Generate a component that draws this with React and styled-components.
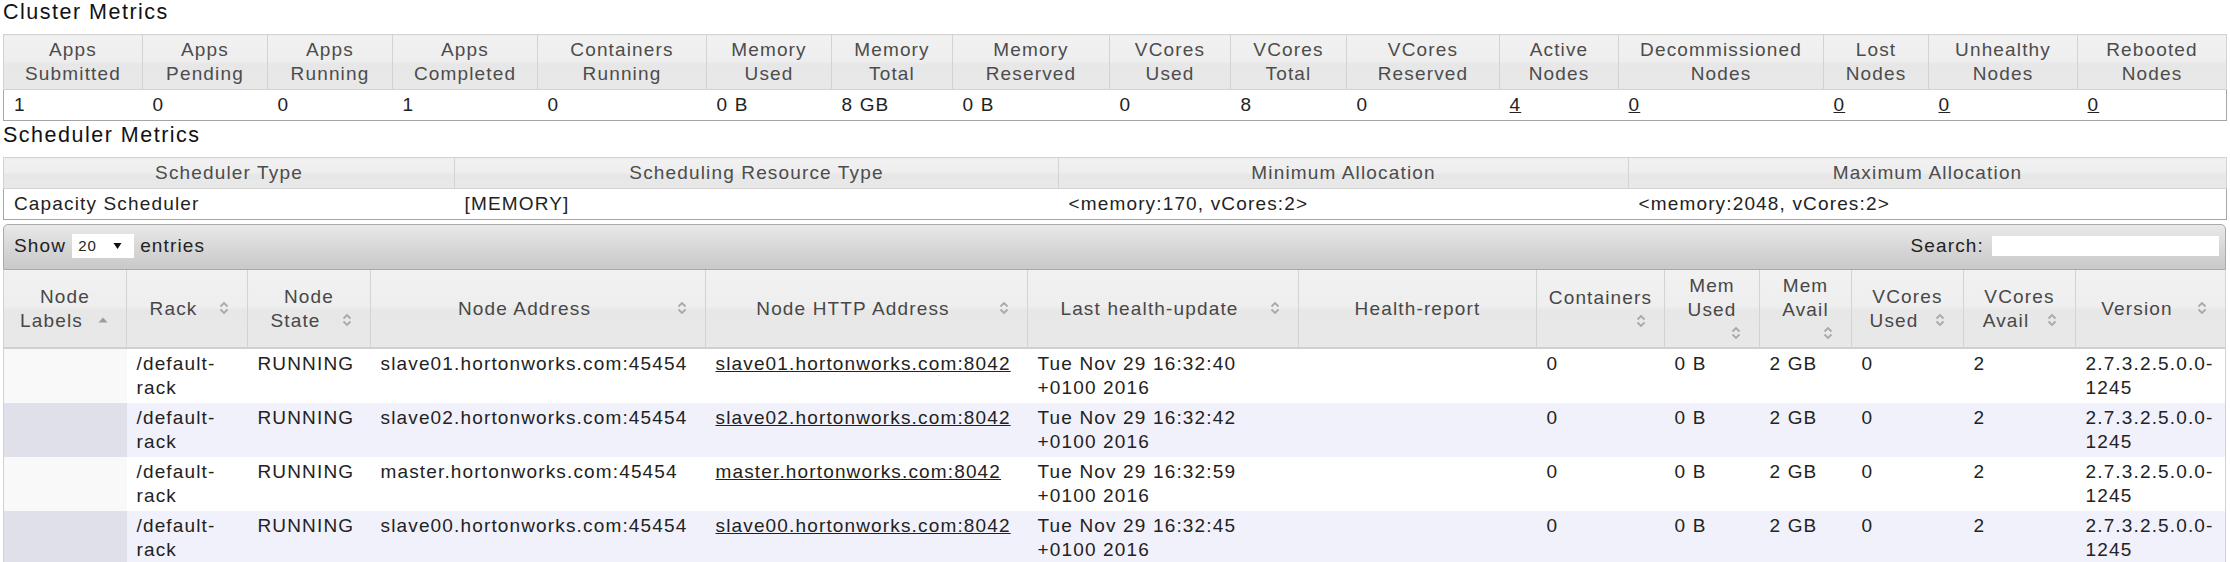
import React from 'react';
import styled, { createGlobalStyle } from 'styled-components';

const GlobalStyle = createGlobalStyle`
  body {
    margin: 0;
    background: #fff;
    color: #222;
    font-family: "Liberation Sans", Arial, sans-serif;
    font-size: 19px;
    letter-spacing: 1.15px;
  }
`;

const Page = styled.div`
  padding: 0 4px 0 3px;
`;

const Heading = styled.h3`
  margin: 0 0 10px;
  font-size: 21.5px;
  letter-spacing: 1.5px;
  line-height: 24px;
  font-weight: normal;
  color: #111;
`;

const headerGlass = `
  background: linear-gradient(
    to bottom,
    #f1f1f1 0%,
    #eeeeee 48%,
    #e7e7e7 52%,
    #e8e8e8 100%
  );
`;

const InfoTable = styled.table`
  width: 100%;
  table-layout: fixed;
  border-collapse: collapse;
  margin-bottom: 2px;
`;

const InfoHead = styled.th`
  ${headerGlass}
  border: 1px solid #d3d3d3;
  padding: 3px 10px;
  line-height: 24px;
  font-weight: normal;
  color: #4c4c4c;
  text-align: center;
`;

const InfoCell = styled.td`
  padding: 3px 10px;
  line-height: 24px;
  text-align: left;
  border-bottom: 1px solid #a6a6a6;
  &:first-child {
    border-left: 1px solid #a6a6a6;
  }
  &:last-child {
    border-right: 1px solid #a6a6a6;
  }
`;

const Link = styled.a`
  color: #222;
  text-decoration: underline;
`;

const Toolbar = styled.div`
  display: flex;
  justify-content: space-between;
  align-items: center;
  margin-top: 4px;
  padding: 9px 6px 11px 10px;
  border: 1px solid #aaa;
  border-radius: 5px 5px 0 0;
  background: linear-gradient(to bottom, #e9e9e9 0%, #d6d6d6 55%, #c9c9c9 100%);
  line-height: 24px;
  color: #222;
`;

const LengthControl = styled.div`
  display: flex;
  align-items: center;
  gap: 6px;
`;

const SelectBox = styled.div`
  display: flex;
  align-items: center;
  justify-content: space-between;
  width: 62px;
  height: 24px;
  box-sizing: border-box;
  padding: 0 12px 0 6px;
  background: #fff;
  font-size: 15px;
  letter-spacing: 1px;
`;

const FilterControl = styled.div`
  display: flex;
  align-items: center;
  gap: 8px;
`;

const SearchInput = styled.div`
  width: 227px;
  height: 20px;
  background: #fff;
`;

const NodesTable = styled.table`
  width: 100%;
  table-layout: fixed;
  border-collapse: collapse;
  border-left: 1px solid #d3d3d3;
  border-right: 1px solid #d3d3d3;
`;

const NodesHead = styled.th`
  ${headerGlass}
  border-right: 1px solid #d3d3d3;
  border-left: 1px solid #d3d3d3;
  border-bottom: 2px solid #d0d0d0;
  padding: 4px 10px 3px;
  line-height: 24px;
  font-weight: normal;
  color: #474747;
  text-align: center;
  vertical-align: middle;
`;

const SortIcon = styled.span`
  float: right;
  width: 27px;
  height: 22px;
  display: flex;
  align-items: center;
  justify-content: center;
`;

const NodeRow = styled.tr`
  background: ${(p) => (p.$alt ? '#f1f1fb' : '#ffffff')};
  &:last-child td {
    border-bottom: 2px solid #ababab;
  }
`;

const NodeCell = styled.td`
  padding: 3px 10px;
  line-height: 24px;
  vertical-align: top;
  text-align: left;
  color: #222;
  background: ${(p) => (p.$sorted ? (p.$alt ? '#e0e0ea' : '#f9f9f9') : 'transparent')};
`;

const BothArrows = () => (
  <svg width="12" height="16" viewBox="0 0 12 16">
    <path
      d="M2.5 6.5 L6 3 L9.5 6.5 M2.5 9.5 L6 13 L9.5 9.5"
      fill="none"
      stroke="#a9a9a9"
      strokeWidth="1.8"
    />
  </svg>
);

const UpArrow = () => (
  <svg width="12" height="16" viewBox="0 0 12 16">
    <path d="M1.5 10.5 L6 5.5 L10.5 10.5 Z" fill="#9c9c9c" />
  </svg>
);

const DownCaret = () => (
  <svg width="9" height="8" viewBox="0 0 9 8">
    <path d="M0.5 1 L8.5 1 L4.5 7 Z" fill="#111" />
  </svg>
);

const clusterCols = [
  { w: 139, h: ['Apps', 'Submitted'], v: '1' },
  { w: 125, h: ['Apps', 'Pending'], v: '0' },
  { w: 125, h: ['Apps', 'Running'], v: '0' },
  { w: 145, h: ['Apps', 'Completed'], v: '1' },
  { w: 169, h: ['Containers', 'Running'], v: '0' },
  { w: 125, h: ['Memory', 'Used'], v: '0 B' },
  { w: 121, h: ['Memory', 'Total'], v: '8 GB' },
  { w: 157, h: ['Memory', 'Reserved'], v: '0 B' },
  { w: 121, h: ['VCores', 'Used'], v: '0' },
  { w: 116, h: ['VCores', 'Total'], v: '8' },
  { w: 153, h: ['VCores', 'Reserved'], v: '0' },
  { w: 119, h: ['Active', 'Nodes'], v: '4', link: true },
  { w: 205, h: ['Decommissioned', 'Nodes'], v: '0', link: true },
  { w: 105, h: ['Lost', 'Nodes'], v: '0', link: true },
  { w: 149, h: ['Unhealthy', 'Nodes'], v: '0', link: true },
  { w: 149, h: ['Rebooted', 'Nodes'], v: '0', link: true },
];

const schedCols = [
  { w: 451, h: 'Scheduler Type', v: 'Capacity Scheduler' },
  { w: 604, h: 'Scheduling Resource Type', v: '[MEMORY]' },
  { w: 570, h: 'Minimum Allocation', v: '<memory:170, vCores:2>' },
  { w: 598, h: 'Maximum Allocation', v: '<memory:2048, vCores:2>' },
];

const nodeCols = [
  { w: 123, label: 'Node Labels', sort: 'asc' },
  { w: 121, label: 'Rack', sort: 'both' },
  { w: 123, label: 'Node State', sort: 'both' },
  { w: 335, label: 'Node Address', sort: 'both' },
  { w: 322, label: 'Node HTTP Address', sort: 'both' },
  { w: 271, label: 'Last health-update', sort: 'both' },
  { w: 238, label: 'Health-report', sort: null },
  { w: 128, label: 'Containers', sort: 'both' },
  { w: 95, label: 'Mem Used', sort: 'both' },
  { w: 92, label: 'Mem Avail', sort: 'both' },
  { w: 112, label: 'VCores Used', sort: 'both' },
  { w: 112, label: 'VCores Avail', sort: 'both' },
  { w: 150, label: 'Version', sort: 'both' },
];

const nodes = [
  { host: 'slave01', time: '16:32:40' },
  { host: 'slave02', time: '16:32:42' },
  { host: 'master', time: '16:32:59' },
  { host: 'slave00', time: '16:32:45' },
];

const App = () => {
  return (
    <Page>
      <GlobalStyle />

      <Heading>Cluster Metrics</Heading>
      <InfoTable>
        <colgroup>
          {clusterCols.map((c, i) => (
            <col key={i} style={{ width: c.w }} />
          ))}
        </colgroup>
        <thead>
          <tr>
            {clusterCols.map((c, i) => (
              <InfoHead key={i}>
                {c.h[0]}
                <br />
                {c.h[1]}
              </InfoHead>
            ))}
          </tr>
        </thead>
        <tbody>
          <tr>
            {clusterCols.map((c, i) => (
              <InfoCell key={i}>{c.link ? <Link href="#">{c.v}</Link> : c.v}</InfoCell>
            ))}
          </tr>
        </tbody>
      </InfoTable>

      <Heading>Scheduler Metrics</Heading>
      <InfoTable>
        <colgroup>
          {schedCols.map((c, i) => (
            <col key={i} style={{ width: c.w }} />
          ))}
        </colgroup>
        <thead>
          <tr>
            {schedCols.map((c, i) => (
              <InfoHead key={i}>{c.h}</InfoHead>
            ))}
          </tr>
        </thead>
        <tbody>
          <tr>
            {schedCols.map((c, i) => (
              <InfoCell key={i}>{c.v}</InfoCell>
            ))}
          </tr>
        </tbody>
      </InfoTable>

      <Toolbar>
        <LengthControl>
          <span>Show</span>
          <SelectBox>
            <span>20</span>
            <DownCaret />
          </SelectBox>
          <span>entries</span>
        </LengthControl>
        <FilterControl>
          <span>Search:</span>
          <SearchInput />
        </FilterControl>
      </Toolbar>

      <NodesTable>
        <colgroup>
          {nodeCols.map((c, i) => (
            <col key={i} style={{ width: c.w }} />
          ))}
        </colgroup>
        <thead>
          <tr>
            {nodeCols.map((c, i) => (
              <NodesHead key={i}>
                {c.label}
                {c.sort && <SortIcon>{c.sort === 'asc' ? <UpArrow /> : <BothArrows />}</SortIcon>}
              </NodesHead>
            ))}
          </tr>
        </thead>
        <tbody>
          {nodes.map((n, i) => {
            const alt = i % 2 === 1;
            return (
              <NodeRow key={n.host} $alt={alt}>
                <NodeCell $sorted $alt={alt}></NodeCell>
                <NodeCell>/default-rack</NodeCell>
                <NodeCell>RUNNING</NodeCell>
                <NodeCell>{n.host}.hortonworks.com:45454</NodeCell>
                <NodeCell>
                  <Link href="#">{n.host}.hortonworks.com:8042</Link>
                </NodeCell>
                <NodeCell>Tue Nov 29 {n.time} +0100 2016</NodeCell>
                <NodeCell></NodeCell>
                <NodeCell>0</NodeCell>
                <NodeCell>0 B</NodeCell>
                <NodeCell>2 GB</NodeCell>
                <NodeCell>0</NodeCell>
                <NodeCell>2</NodeCell>
                <NodeCell>2.7.3.2.5.0.0-1245</NodeCell>
              </NodeRow>
            );
          })}
        </tbody>
      </NodesTable>
    </Page>
  );
};

export default App;
